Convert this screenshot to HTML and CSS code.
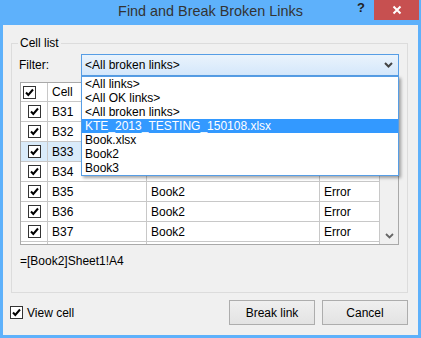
FILE: index.html
```html
<!DOCTYPE html>
<html>
<head>
<meta charset="utf-8">
<title>Find and Break Broken Links</title>
<link rel="stylesheet" href="styles.css">
</head>
<body>
<div class="window">
  <div class="titlebar">
    <div class="tb-spacer"></div>
    <div class="title">Find and Break Broken Links</div>
    <div class="controls">
      <span class="help">?</span>
      <span class="close"><svg width="10" height="10" viewBox="0 0 10 10"><path d="M1.5 1.5 L8.5 8.5 M8.5 1.5 L1.5 8.5" stroke="#fff" stroke-width="2" fill="none"/></svg></span>
    </div>
  </div>
  <div class="client">
    <div class="group">
      <div class="legend">Cell list</div>
      <div class="filter-row">
        <span class="filter-label">Filter:</span>
        <div class="combo">
          <div class="combo-box">
            <span>&lt;All broken links&gt;</span>
            <svg class="chev" width="9" height="6" viewBox="0 0 9 6"><path d="M1 1 L4.5 4.5 L8 1" stroke="#444" stroke-width="2" fill="none"/></svg>
          </div>
          <ul class="combo-list">
            <li>&lt;All links&gt;</li>
            <li>&lt;All OK links&gt;</li>
            <li>&lt;All broken links&gt;</li>
            <li class="sel">KTE_2013_TESTING_150108.xlsx</li>
            <li>Book.xlsx</li>
            <li>Book2</li>
            <li>Book3</li>
          </ul>
        </div>
      </div>
      <div class="grid">
        <div class="rows">
          <div class="row head">
            <div class="cell c1 left"><span class="cb"><svg width="11" height="11" viewBox="0 0 11 11"><path d="M2 5.5 L4.3 8 L9 2.5" fill="none" stroke="#000" stroke-width="2"/></svg></span></div>
            <div class="cell">Cell</div>
            <div class="cell"></div>
            <div class="cell"></div>
          </div>
          <div class="row">
            <div class="cell c1"><span class="cb"><svg width="11" height="11" viewBox="0 0 11 11"><path d="M2 5.5 L4.3 8 L9 2.5" fill="none" stroke="#000" stroke-width="2"/></svg></span></div>
            <div class="cell">B31</div><div class="cell"></div><div class="cell"></div>
          </div>
          <div class="row">
            <div class="cell c1"><span class="cb"><svg width="11" height="11" viewBox="0 0 11 11"><path d="M2 5.5 L4.3 8 L9 2.5" fill="none" stroke="#000" stroke-width="2"/></svg></span></div>
            <div class="cell">B32</div><div class="cell"></div><div class="cell"></div>
          </div>
          <div class="row selected">
            <div class="cell c1"><span class="cb"><svg width="11" height="11" viewBox="0 0 11 11"><path d="M2 5.5 L4.3 8 L9 2.5" fill="none" stroke="#000" stroke-width="2"/></svg></span></div>
            <div class="cell">B33</div><div class="cell"></div><div class="cell"></div>
          </div>
          <div class="row">
            <div class="cell c1"><span class="cb"><svg width="11" height="11" viewBox="0 0 11 11"><path d="M2 5.5 L4.3 8 L9 2.5" fill="none" stroke="#000" stroke-width="2"/></svg></span></div>
            <div class="cell">B34</div><div class="cell">Book2</div><div class="cell">Error</div>
          </div>
          <div class="row">
            <div class="cell c1"><span class="cb"><svg width="11" height="11" viewBox="0 0 11 11"><path d="M2 5.5 L4.3 8 L9 2.5" fill="none" stroke="#000" stroke-width="2"/></svg></span></div>
            <div class="cell">B35</div><div class="cell">Book2</div><div class="cell">Error</div>
          </div>
          <div class="row">
            <div class="cell c1"><span class="cb"><svg width="11" height="11" viewBox="0 0 11 11"><path d="M2 5.5 L4.3 8 L9 2.5" fill="none" stroke="#000" stroke-width="2"/></svg></span></div>
            <div class="cell">B36</div><div class="cell">Book2</div><div class="cell">Error</div>
          </div>
          <div class="row">
            <div class="cell c1"><span class="cb"><svg width="11" height="11" viewBox="0 0 11 11"><path d="M2 5.5 L4.3 8 L9 2.5" fill="none" stroke="#000" stroke-width="2"/></svg></span></div>
            <div class="cell">B37</div><div class="cell">Book2</div><div class="cell">Error</div>
          </div>
          <div class="row">
            <div class="cell c1"></div>
            <div class="cell"></div><div class="cell"></div><div class="cell"></div>
          </div>
        </div>
        <div class="scroll">
          <svg width="9" height="6" viewBox="0 0 9 6"><path d="M1 1 L4.5 4.5 L8 1" stroke="#666" stroke-width="1.8" fill="none"/></svg>
        </div>
      </div>
      <div class="formula">=[Book2]Sheet1!A4</div>
    </div>
    <div class="footer">
      <label class="viewcell">
        <span class="cb"><svg width="11" height="11" viewBox="0 0 11 11"><path d="M2 5.5 L4.3 8 L9 2.5" fill="none" stroke="#000" stroke-width="2"/></svg></span>
        <span>View cell</span>
      </label>
      <div class="buttons">
        <button class="btn">Break link</button>
        <button class="btn">Cancel</button>
      </div>
    </div>
  </div>
</div>
</body>
</html>
```

FILE: styles.css
```css
* { box-sizing: border-box; }
html, body { margin: 0; padding: 0; }
body {
  width: 421px;
  height: 338px;
  overflow: hidden;
  background: #5eb1fb;
  font-family: "Liberation Sans", Arial, sans-serif;
  font-size: 12px;
  color: #000;
}
.window {
  display: flex;
  flex-direction: column;
  height: 338px;
}
.titlebar {
  height: 25px;
  display: grid;
  grid-template-columns: 1fr auto 1fr;
  align-items: start;
  flex-shrink: 0;
}
.title {
  font-size: 14.4px;
  color: #333;
  line-height: 16px;
  padding-top: 3px;
  white-space: nowrap;
}
.controls {
  justify-self: end;
  display: flex;
  align-items: flex-start;
  margin-right: 2px;
}
.help {
  width: 20px;
  text-align: center;
  font-weight: bold;
  font-size: 13px;
  line-height: 14px;
  padding-top: 1px;
  margin-right: 3px;
  color: #222;
}
.close {
  width: 45px;
  height: 20px;
  background: #c75050;
  display: flex;
  align-items: center;
  justify-content: center;
}
.client {
  flex: 1;
  margin: 0 3px 3px;
  background: #f0f0f0;
  display: flex;
  flex-direction: column;
}
.group {
  margin: 18px 10px 0 8px;
  height: 250px;
  border: 1px solid #dcdcdc;
}
.legend {
  width: fit-content;
  margin: -8px 0 0 6px;
  padding: 0 2px;
  background: #f0f0f0;
  line-height: 15px;
}
.filter-row {
  display: flex;
  align-items: center;
  margin-top: 3px;
  padding-left: 7px;
}
.filter-label { width: 62px; }
.combo {
  position: relative;
  width: 318px;
}
.combo-box {
  height: 22px;
  border: 1px solid #569de5;
  background: linear-gradient(#eaf3fc, #d4e7fb);
  display: flex;
  align-items: center;
  justify-content: space-between;
  padding: 0 5px 0 3px;
}
.combo-list {
  position: absolute;
  top: 22px;
  left: 0;
  width: 318px;
  height: 100px;
  margin: 0;
  padding: 0;
  list-style: none;
  background: #fff;
  border: 1px solid #569de5;
  box-shadow: 2px 2px 3px rgba(0, 0, 0, 0.35);
  z-index: 2;
}
.combo-list li {
  height: 14px;
  line-height: 14px;
  padding-left: 3px;
  white-space: nowrap;
}
.combo-list li.sel {
  background: #3399ff;
  color: #fff;
}
.grid {
  margin: 6px 0 0 8px;
  width: 379px;
  height: 163px;
  border: 1px solid #a9a9a9;
  display: flex;
  background: #fff;
}
.rows {
  width: 359px;
  overflow: hidden;
}
.row {
  display: grid;
  grid-template-columns: 27px 99px 173px 60px;
  height: 20px;
}
.row.head { height: 19px; }
.row.selected { background: #d9ebfa; }
.cell {
  border-right: 1px solid #c8c8c8;
  border-bottom: 1px solid #c8c8c8;
  padding-left: 4px;
  display: flex;
  align-items: center;
  white-space: nowrap;
  overflow: hidden;
}
.cell.c1 {
  padding-left: 0;
  justify-content: center;
}
.cell.c1.left {
  justify-content: flex-start;
  padding-left: 2px;
}
.cb {
  width: 13px;
  height: 13px;
  border: 1px solid #333;
  background: #fff;
  display: flex;
  align-items: center;
  justify-content: center;
  flex-shrink: 0;
}
.scroll {
  width: 18px;
  background: #f0f0f0;
  display: flex;
  align-items: flex-end;
  justify-content: center;
  padding-bottom: 5px;
}
.formula {
  margin: 9px 0 0 8px;
  line-height: 15px;
}
.footer {
  display: flex;
  align-items: center;
  justify-content: space-between;
  margin-top: 7px;
  padding: 0 10px 0 7px;
}
.viewcell {
  display: flex;
  align-items: center;
  gap: 4px;
}
.buttons {
  display: flex;
  gap: 7px;
}
.btn {
  width: 86px;
  height: 25px;
  border: 1px solid #adadad;
  background: linear-gradient(#efefef, #e3e3e3);
  font-family: inherit;
  font-size: 12px;
  color: #000;
  padding: 0;
}
```
